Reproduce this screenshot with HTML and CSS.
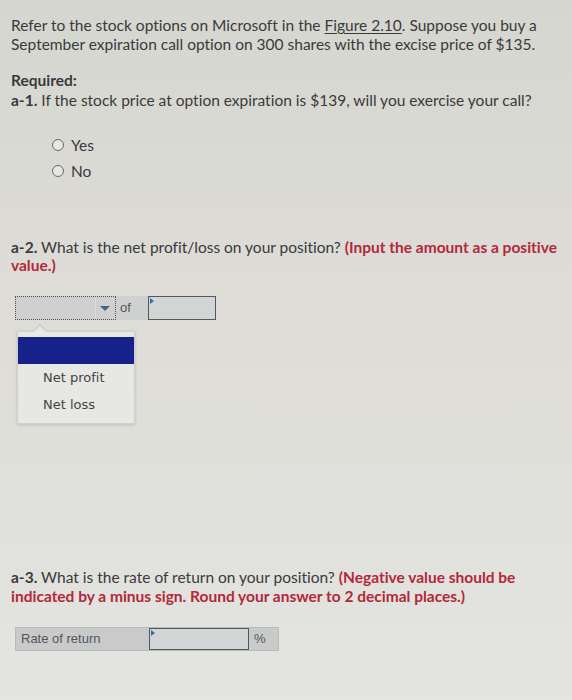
FILE: index.html
```html
<!DOCTYPE html>
<html lang="en">
<head>
    <meta charset="UTF-8">
    <meta name="viewport" content="width=device-width, initial-scale=1.0">
    <title>Stock options question</title>
    <link rel="stylesheet" href="styles.css">
</head>
<body>
    <div class="question">
        <p class="intro">Refer to the stock options on Microsoft in the <a href="#" class="fig-link">Figure 2.10</a>. Suppose you buy a<br>September expiration call option on 300 shares with the excise price of $135.</p>

        <p class="required"><b>Required:</b><br><b>a-1.</b> If the stock price at option expiration is $139, will you exercise your call?</p>

        <div class="choices">
            <label class="choice"><span class="radio"></span>Yes</label>
            <label class="choice"><span class="radio"></span>No</label>
        </div>

        <p class="part"><span class="line"><b>a-2.</b> What is the net profit/loss on your position? <span class="hint">(Input the amount as a positive</span></span><br><span class="hint">value.)</span></p>

        <div class="answer-row">
            <div class="dropdown">
                <div class="dropdown-value"></div>
                <div class="dropdown-arrow"></div>
                <div class="dropdown-menu">
                    <div class="menu-selected"></div>
                    <div class="menu-item">Net profit</div>
                    <div class="menu-item">Net loss</div>
                </div>
            </div>
            <div class="of-cell">of</div>
            <div class="num-input"></div>
        </div>

        <p class="part part-a3"><b>a-3.</b> What is the rate of return on your position? <span class="hint">(Negative value should be<br>indicated by a minus sign. Round your answer to 2 decimal places.)</span></p>

        <div class="rate-table">
            <div class="rate-label">Rate of return</div>
            <div class="num-input rate-input"></div>
            <div class="rate-unit">%</div>
        </div>
    </div>
</body>
</html>
```

FILE: styles.css
```css
body { margin: 0; background: linear-gradient(180deg, #d6d6d0 0%, #dddcd7 40%, #e4e4e0 100%); font-family: Lato, "Open Sans", sans-serif; font-variant-ligatures: none; color: #3a3a3a; min-height: 700px; }
.question { padding: 16px 0 0 11px; }
p { margin: 0; }
b { font-weight: 700; }
.line { white-space: nowrap; }

.intro { font-size: 15.5px; line-height: 19px; }
.fig-link { color: #3a3a3a; text-decoration: underline; text-underline-offset: 2px; }

.required { margin-top: 16px; font-size: 15.5px; line-height: 20px; }

.choices { margin-top: 22px; padding-left: 41px; font-size: 15.5px; }
.choice { display: flex; align-items: center; height: 26px; }
.radio { width: 10px; height: 10px; border: 1px solid #6a6a6a; border-radius: 50%; margin-right: 7px; background: #e6e6e2; }

.part { margin-top: 54px; font-size: 15.5px; line-height: 18px; }
.hint { color: #b3283a; font-weight: 700; }

.answer-row { display: flex; margin-top: 22px; margin-left: 4px; height: 24px; }
.dropdown { position: relative; display: flex; width: 99px; border: 1px dotted #555; background: #cfd0cf; }
.dropdown-value { flex: 1; }
.dropdown-arrow { width: 19px; border-left: 1px solid #dcdcda; position: relative; }
.dropdown-arrow::after { content: ""; position: absolute; left: 4px; top: 9px; border-left: 5px solid transparent; border-right: 5px solid transparent; border-top: 5px solid #3d6688; }
.of-cell { width: 28px; padding-left: 4px; background: #cfd1d0; font-family: "Liberation Sans", Arial, sans-serif; font-size: 13px; line-height: 24px; color: #555; }
.num-input { position: relative; width: 66px; border: 1.5px solid #4e5862; background: #d3d5d4; }
.num-input::before { content: ""; position: absolute; left: 1px; top: 1px; border-top: 3px solid transparent; border-bottom: 3px solid transparent; border-left: 4px solid #2e6fb0; }

.dropdown-menu { position: absolute; left: 1px; top: 34px; width: 116px; padding: 5px 0 5px 0; background: #e7e7e3; border: 1px solid #cfcfcb; box-shadow: 0 1px 3px rgba(0,0,0,0.15); z-index: 10; }
.dropdown-menu::before { content: ""; position: absolute; left: 17px; top: -6px; width: 9px; height: 9px; background: #e7e7e3; border-left: 1px solid #c4c4c0; border-top: 1px solid #c4c4c0; transform: rotate(45deg); }
.menu-selected { position: relative; height: 27px; background: #16218a; }
.menu-item { padding-left: 25px; font-family: "DejaVu Sans", sans-serif; font-size: 13px; line-height: 27px; color: #444; }

.part-a3 { margin-top: 248px; line-height: 19px; }

.rate-table { display: flex; margin-top: 21px; margin-left: 4px; width: 262px; height: 22px; background: #c9cbcb; border: 1px solid #b9bbbb; }
.rate-label { width: 128px; padding-left: 5px; font-family: "Liberation Sans", Arial, sans-serif; font-size: 13px; line-height: 22px; color: #555; }
.rate-input { width: 98px; background: #d3d6d6; }
.rate-unit { padding-left: 5px; font-family: "Liberation Sans", Arial, sans-serif; font-size: 13px; line-height: 22px; color: #555; }
```
